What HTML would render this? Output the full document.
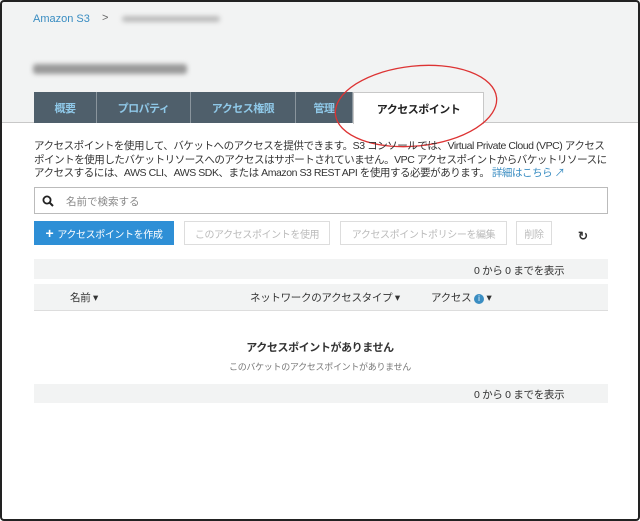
<!DOCTYPE html><html><head><meta charset="utf-8"><style>
*{box-sizing:border-box;margin:0;padding:0}
body{width:640px;height:521px;font-family:"Liberation Sans","Noto Sans CJK JP",sans-serif;background:#fff;position:relative;overflow:hidden;color:#333}
.frame{position:absolute;left:0;top:0;width:640px;height:521px;border:2px solid #222;border-radius:4px;z-index:10}
.hdr{position:absolute;left:0;top:0;width:640px;height:123px;background:#f2f3f3;border-bottom:1px solid #c8c8c8}
.a{position:absolute;white-space:nowrap}
.blur{background:#bbb;filter:blur(2.5px);border-radius:3px}
.tab{position:absolute;top:92px;height:31px;background:#4f5f6b;color:#8fc8e8;font-size:11px;font-weight:bold;display:flex;align-items:center;justify-content:center;border-right:1px solid #8a959d;letter-spacing:-0.5px}
.btn{position:absolute;top:221px;height:24px;border:1px solid #ddd;color:#bbb;font-size:10px;letter-spacing:-0.4px;display:flex;align-items:center;justify-content:center;background:#fff}
.bar{position:absolute;left:34px;width:574px;background:#f2f3f3;font-size:10.5px;letter-spacing:-0.3px}
</style></head><body><div class="frame"></div>
<div class="hdr"></div>
<div class="a" style="left:33px;top:13px;font-size:11px;color:#3a8dc2">Amazon S3</div>
<div class="a" style="left:102px;top:12px;font-size:11px;color:#666">&gt;</div>
<div class="a blur" style="left:122px;top:16px;width:98px;height:6px"></div>
<div class="a blur" style="left:33px;top:64px;width:154px;height:10px;background:#999"></div>
<div class="tab" style="left:34px;width:63px">概要</div>
<div class="tab" style="left:97px;width:94px">プロパティ</div>
<div class="tab" style="left:191px;width:105px">アクセス権限</div>
<div class="tab" style="left:296px;width:57px">管理</div>
<div class="tab" style="left:353px;width:131px;background:#fff;color:#222;border:1px solid #c8c8c8;border-bottom:none;height:32px">アクセスポイント</div>
<svg class="a" style="left:330px;top:60px" width="175" height="110"><ellipse cx="86" cy="46" rx="81" ry="40" fill="none" stroke="#d33" stroke-width="1.3" transform="rotate(-6 86 46)"/></svg>
<div class="a" style="left:34px;top:140px;font-size:10.5px;letter-spacing:-0.45px;line-height:13.5px;color:#333;white-space:normal;width:578px">アクセスポイントを使用して、バケットへのアクセスを提供できます。S3 コンソールでは、Virtual Private Cloud (VPC) アクセスポイントを使用したバケットリソースへのアクセスはサポートされていません。VPC アクセスポイントからバケットリソースにアクセスするには、AWS CLI、AWS SDK、または Amazon S3 REST API を使用する必要があります。 <span style="color:#3a8dc2">詳細はこちら ↗</span></div>
<div class="a" style="left:34px;top:187px;width:574px;height:27px;border:1px solid #bbb;background:#fff"></div>
<svg class="a" style="left:42px;top:195px" width="12" height="12"><circle cx="5" cy="5" r="3.6" fill="none" stroke="#222" stroke-width="1.8"/><line x1="7.5" y1="7.5" x2="11" y2="11" stroke="#222" stroke-width="2"/></svg>
<div class="a" style="left:66px;top:194px;font-size:10.5px;color:#888">名前で検索する</div>
<div class="btn" style="left:34px;width:140px;background:#2e8fd6;color:#fff;border-color:#2e8fd6"><b style="font-size:14px;margin-right:4px">+</b>アクセスポイントを作成</div>
<div class="btn" style="left:184px;width:146px">このアクセスポイントを使用</div>
<div class="btn" style="left:340px;width:167px">アクセスポイントポリシーを編集</div>
<div class="btn" style="left:516px;width:36px">削除</div>
<div class="a" style="left:578px;top:229px;font-size:12px;font-weight:bold;color:#333">↻</div>
<div class="bar" style="top:259px;height:20px"><span class="a" style="left:440px;top:4px;color:#333">0 から 0 までを表示</span></div>
<div class="bar" style="top:284px;height:27px;border-bottom:1px solid #ddd"><span class="a" style="left:36px;top:6px">名前 ▾</span><span class="a" style="left:216px;top:6px">ネットワークのアクセスタイプ ▾</span><span class="a" style="left:397px;top:6px">アクセス <span style="display:inline-block;width:10px;height:10px;border-radius:50%;background:#3a8dc2;color:#fff;font-size:8px;text-align:center;line-height:10px">i</span> ▾</span></div>
<div class="a" style="left:0;width:640px;top:339px;text-align:center;font-size:11px;font-weight:bold;color:#333;letter-spacing:-0.4px">アクセスポイントがありません</div>
<div class="a" style="left:0;width:640px;top:360px;text-align:center;font-size:9px;color:#777;letter-spacing:-0.3px">このバケットのアクセスポイントがありません</div>
<div class="bar" style="top:384px;height:19px"><span class="a" style="left:440px;top:3px;color:#333">0 から 0 までを表示</span></div>
</body></html>
